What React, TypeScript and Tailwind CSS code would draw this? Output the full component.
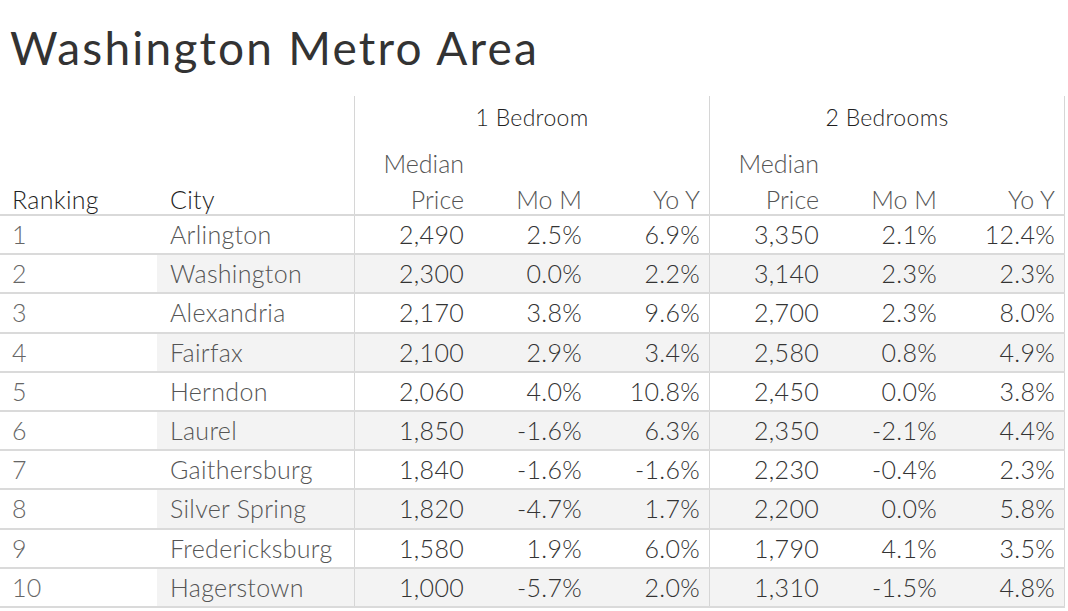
import React from "react";

const rows: string[][] = [
  ["1", "Arlington", "2,490", "2.5%", "6.9%", "3,350", "2.1%", "12.4%"],
  ["2", "Washington", "2,300", "0.0%", "2.2%", "3,140", "2.3%", "2.3%"],
  ["3", "Alexandria", "2,170", "3.8%", "9.6%", "2,700", "2.3%", "8.0%"],
  ["4", "Fairfax", "2,100", "2.9%", "3.4%", "2,580", "0.8%", "4.9%"],
  ["5", "Herndon", "2,060", "4.0%", "10.8%", "2,450", "0.0%", "3.8%"],
  ["6", "Laurel", "1,850", "-1.6%", "6.3%", "2,350", "-2.1%", "4.4%"],
  ["7", "Gaithersburg", "1,840", "-1.6%", "-1.6%", "2,230", "-0.4%", "2.3%"],
  ["8", "Silver Spring", "1,820", "-4.7%", "1.7%", "2,200", "0.0%", "5.8%"],
  ["9", "Fredericksburg", "1,580", "1.9%", "6.0%", "1,790", "4.1%", "3.5%"],
  ["10", "Hagerstown", "1,000", "-5.7%", "2.0%", "1,310", "-1.5%", "4.8%"],
];

function GroupHeader({ title }: { title: string }) {
  return (
    <div className="flex h-[118px] w-[355px] flex-col border-r border-[#d6d6d6]">
      <div className="h-[52px] pt-[6px] text-center text-[23px] font-light leading-[30px] tracking-[0.3px] text-[#1f1f1f]">{title}</div>
      <div className="flex h-[30px] text-[25px] font-light leading-[30px] text-[#555555]">
        <div className="w-[118px] pr-[9px] text-right">Median</div>
        <div className="w-[118px]" />
        <div className="w-[118px]" />
      </div>
      <div className="mt-[6px] flex h-[30px] text-[25px] font-light leading-[30px] text-[#555555]">
        <div className="w-[118px] pr-[9px] text-right">Price</div>
        <div className="w-[118px] pr-[9px] text-right">Mo M</div>
        <div className="w-[118px] pr-[9px] text-right">Yo Y</div>
      </div>
    </div>
  );
}

export default function App() {
  return (
    <div className="h-[611px] w-[1068px] overflow-hidden bg-white font-['Lato',sans-serif]">
      <h1 className="mt-[20px] h-[56px] pl-[10px] text-[46px] font-normal leading-[56px] tracking-[2.2px] text-[#333333]">
        Washington Metro Area
      </h1>
      <div className="mt-[20px] w-[1065px]">
        <div className="flex border-b-2 border-[#d9d9d9]">
          <div className="flex h-[118px] w-[355px] items-end border-r border-[#d6d6d6] text-[25px] font-light leading-[30px] tracking-[0.3px] text-[#1f1f1f]">
            <div className="w-[157px] pl-[12px]">Ranking</div>
            <div className="pl-[13px]">City</div>
          </div>
          <GroupHeader title="1 Bedroom" />
          <GroupHeader title="2 Bedrooms" />
        </div>
        {rows.map((r, i) => {
          const band = i % 2 === 1 ? "bg-[#f3f3f3]" : "bg-white";
          return (
            <div key={r[0]} className="flex h-[39.2px] border-b-2 border-[#dadada] text-[25px] font-light leading-[37px] tracking-[0.3px]">
              <div className="w-[157px] bg-white pl-[12px] text-[#666666]">{r[0]}</div>
              <div className={`w-[198px] border-r border-[#d6d6d6] pl-[13px] text-[#555555] ${band}`}>{r[1]}</div>
              <div className={`flex w-[355px] border-r border-[#d6d6d6] text-[#333333] ${band}`}>
                <div className="w-[118px] pr-[9px] text-right">{r[2]}</div>
                <div className="w-[118px] pr-[9px] text-right">{r[3]}</div>
                <div className="w-[118px] pr-[9px] text-right">{r[4]}</div>
              </div>
              <div className={`flex w-[355px] border-r border-[#d6d6d6] text-[#333333] ${band}`}>
                <div className="w-[118px] pr-[9px] text-right">{r[5]}</div>
                <div className="w-[118px] pr-[9px] text-right">{r[6]}</div>
                <div className="w-[118px] pr-[9px] text-right">{r[7]}</div>
              </div>
            </div>
          );
        })}
      </div>
    </div>
  );
}
